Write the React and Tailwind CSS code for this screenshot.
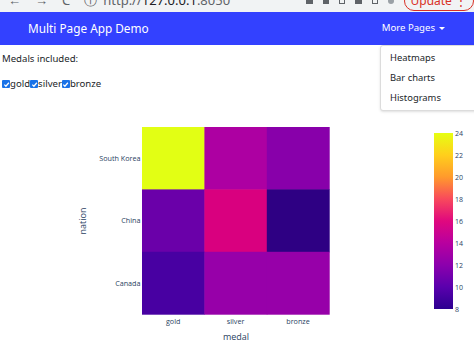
import React from 'react';

const rows = ['South Korea', 'China', 'Canada'];
const cols = ['gold', 'silver', 'bronze'];
const cells = [
  ['#e2ff14', '#ad00a2', '#8800aa'],
  ['#6a00a9', '#d9007f', '#2e0083'],
  ['#4800a2', '#9700a9', '#9700a9'],
];
const ticks = [24, 22, 20, 18, 16, 14, 12, 10, 8];

const Heatmap = () => {
  const x0 = 142;
  const y0 = 26;
  const w = 62.4;
  const h = 62.4;
  return (
    <svg width="474" height="247" viewBox="0 0 474 247" className="block" style={{ fontFamily: '"Open Sans", "Liberation Sans", sans-serif' }}>
      <defs>
        <linearGradient id="cb" x1="0" y1="0" x2="0" y2="1">
          <stop offset="0" stopColor="#e6ff12" />
          <stop offset="0.125" stopColor="#ffcf1c" />
          <stop offset="0.25" stopColor="#ff9a2c" />
          <stop offset="0.375" stopColor="#f8495c" />
          <stop offset="0.5" stopColor="#e0087e" />
          <stop offset="0.625" stopColor="#b8009f" />
          <stop offset="0.75" stopColor="#8c00ad" />
          <stop offset="0.875" stopColor="#5a00ad" />
          <stop offset="1" stopColor="#2c0090" />
        </linearGradient>
      </defs>
      {cells.map((row, r) =>
        row.map((c, k) => (
          <rect key={`${r}-${k}`} x={x0 + k * w} y={y0 + r * h} width={w + 0.5} height={h + 0.5} fill={c} />
        ))
      )}
      {rows.map((name, r) => (
        <text key={name} x={140.5} y={y0 + r * h + h / 2 + 2.5} fontSize="7.2" fill="#2a3f5f" textAnchor="end">
          {name}
        </text>
      ))}
      {cols.map((name, k) => (
        <text key={name} x={x0 + k * w + w / 2} y={223} fontSize="7.2" fill="#2a3f5f" textAnchor="middle">
          {name}
        </text>
      ))}
      <text x={236} y={239} fontSize="9" fill="#2a3f5f" textAnchor="middle">medal</text>
      <text x={0} y={0} fontSize="9" fill="#2a3f5f" textAnchor="middle" transform="translate(86 120) rotate(-90)">
        nation
      </text>
      <rect x={434} y={32} width={19} height={176} fill="url(#cb)" />
      {ticks.map((t, i) => (
        <text key={t} x={455} y={34.5 + i * 22} fontSize="7" fill="#2a3f5f">
          {t}
        </text>
      ))}
    </svg>
  );
};

const Check = ({ label }) => (
  <label className="flex items-center">
    <span className="flex h-[8px] w-[8px] items-center justify-center rounded-[1px] bg-[#1a73e8]">
      <svg width="7" height="7" viewBox="0 0 8 8">
        <path d="M1.5 4.2 L3.3 6 L6.7 2" stroke="white" strokeWidth="1.4" fill="none" />
      </svg>
    </span>
    <span>{label}</span>
  </label>
);

export default function App() {
  return (
    <div className="relative h-[347px] w-[474px] overflow-hidden bg-white text-[#212529]" style={{ fontFamily: '"Noto Sans", "Open Sans", sans-serif' }}>
      <div className="h-[12px] overflow-hidden bg-[#f1f3f4]">
        <div className="-mt-[9px] flex h-[20px] items-center justify-between pl-[8px] pr-0 text-[13px] text-[#5f6368]">
          <div className="flex items-center gap-[14px]">
            <span>←</span>
            <span>→</span>
            <span>C</span>
            <span className="flex items-center gap-[6px]">
              <span>ⓘ</span>
              <span>http://<span className="text-[#202124]">127.0.0.1</span>:8050</span>
            </span>
          </div>
          <div className="flex items-center gap-[10px]">
            <span className="h-[6px] w-[7px] bg-[#5f6368]" />
            <span className="h-[6px] w-[6px] bg-[#5f6368]" />
            <span className="h-[6px] w-[6px] border border-[#5f6368]" />
            <span className="h-[6px] w-[7px] bg-[#5f6368]" />
            <span className="h-[6px] w-[6px] border border-[#5f6368]" />
            <span className="h-[6px] w-[6px] rounded-full bg-[#9aa0a6]" />
            <span className="rounded-full border border-[#d93025] px-[6px] text-[12px] leading-[18px] text-[#d93025]">Update ⋮</span>
          </div>
        </div>
      </div>

      <nav className="relative flex h-[33px] items-center justify-between bg-[#3341ff] pl-[28px] pr-[29px] text-white">
        <span className="text-[11.8px]">Multi Page App Demo</span>
        <span className="flex items-center gap-[4px] text-[9.6px]">
          More Pages
          <span className="h-0 w-0 border-x-[3.5px] border-t-[3.5px] border-x-transparent border-t-white" />
        </span>
        <div className="absolute left-[380px] top-[33px] z-10 w-[100px] rounded-[3px] border border-[#dcdcdc] bg-white py-[2px] text-[9.4px] text-[#212529] shadow-sm">
          <div className="px-[9px] leading-[20px]">Heatmaps</div>
          <div className="px-[9px] leading-[20px]">Bar charts</div>
          <div className="px-[9px] leading-[20px]">Histograms</div>
        </div>
      </nav>

      <div className="px-[2px] pt-[5px] text-[9.6px]">
        <div className="leading-[18px]">Medals included:</div>
        <div className="mt-[9px] flex items-center leading-[14px]">
          <Check label="gold" />
          <Check label="silver" />
          <Check label="bronze" />
        </div>
      </div>

      <div className="mt-[10px]">
        <Heatmap />
      </div>
    </div>
  );
}
